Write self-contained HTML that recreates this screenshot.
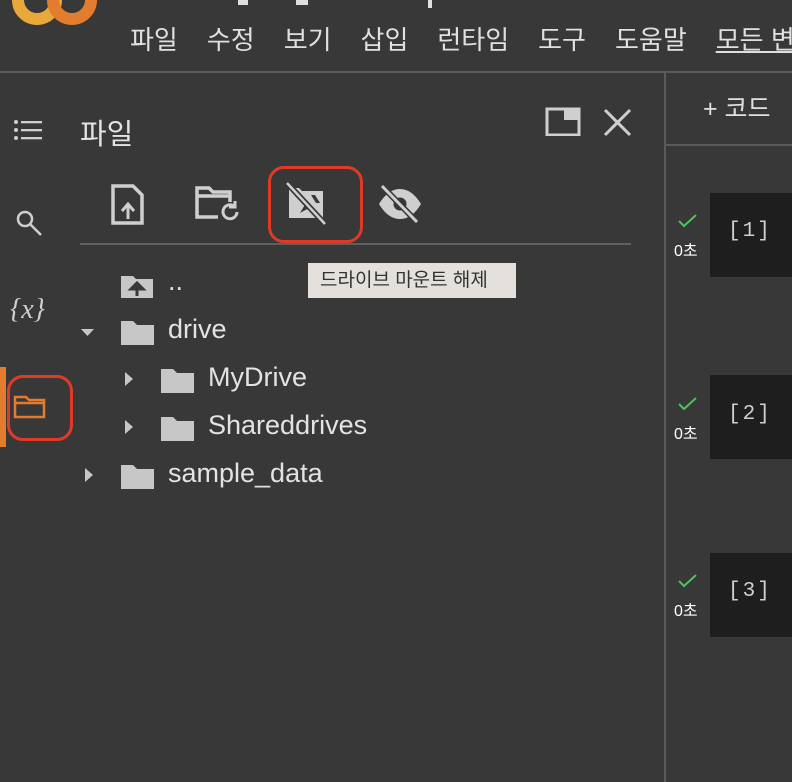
<!DOCTYPE html>
<html><head><meta charset="utf-8"><style>
*{margin:0;padding:0;box-sizing:border-box}
body{width:792px;height:782px;background:#383838;overflow:hidden;position:relative;font-family:"Liberation Sans","Noto Sans CJK KR",sans-serif;color:#e3e3e3}
.a{position:absolute}
.menu{top:20px;left:130px;font-size:26px;color:#e0e0e0;white-space:nowrap}
.menu span{margin-right:29px}
.row{font-size:27px;color:#e3e3e3}
.cell{background:#1e1e1e;width:90px;height:84px;left:710px}
.br{left:728px;font-size:21px;color:#cfcfcf;font-family:"Liberation Mono",monospace;letter-spacing:2px}
.ck{left:674px;font-size:16px;color:#fff}
</style></head><body>
<svg class="a" style="left:0;top:-30px" width="120" height="60">
<circle cx="37" cy="30" r="19" fill="none" stroke="#e8a93a" stroke-width="12"/>
<circle cx="72" cy="30" r="19" fill="none" stroke="#e27c2e" stroke-width="12"/>
</svg>
<div class="a" style="left:238px;top:0;width:10px;height:5px;background:#e0e0e0"></div>
<div class="a" style="left:296px;top:0;width:12px;height:5px;background:#e0e0e0"></div>
<div class="a" style="left:428px;top:0;width:4px;height:8px;background:#e0e0e0"></div>
<div class="a menu"><span>파일</span><span>수정</span><span>보기</span><span>삽입</span><span>런타임</span><span>도구</span><span>도움말</span><span style="text-decoration:underline">모든 변경</span></div>
<div class="a" style="left:0;top:71px;width:792px;height:2px;background:#5a5a5a"></div>
<div class="a" style="left:664px;top:73px;width:2px;height:709px;background:#5a5a5a"></div>
<div class="a" style="left:666px;top:144px;width:126px;height:2px;background:#5a5a5a"></div>
<div class="a" style="left:703px;top:89px;font-size:25px;color:#e0e0e0">+ 코드</div>
<svg class="a" style="left:12px;top:118px" width="34" height="26" fill="#cfcfcf"><circle cx="4" cy="4" r="2"/><circle cx="4" cy="12" r="2"/><circle cx="4" cy="20" r="2"/><rect x="9" y="3" width="21" height="2.3"/><rect x="9" y="11" width="21" height="2.3"/><rect x="9" y="19" width="21" height="2.3"/></svg>
<svg class="a" style="left:14px;top:208px" width="32" height="32" fill="none" stroke="#cfcfcf" stroke-width="2.5"><circle cx="11" cy="11" r="7"/><path d="M16 16l11 11"/></svg>
<div class="a" style="left:10px;top:294px;font-size:28px;color:#cfcfcf;font-family:'Liberation Serif',serif;font-style:italic">{<i>x</i>}</div>
<div class="a" style="left:0;top:367px;width:6px;height:80px;background:#e27c2e"></div>
<div class="a" style="left:7px;top:375px;width:66px;height:66px;border:3px solid #e03a26;border-radius:16px"></div>
<svg class="a" style="left:13px;top:393px" width="34" height="28" fill="none" stroke="#e27c2e" stroke-width="2.5"><path d="M2 4h11l3 3h15v17H2z"/><path d="M2 10h29"/></svg>
<div class="a" style="left:80px;top:111px;font-size:29px;color:#e3e3e3">파일</div>
<svg class="a" style="left:544px;top:106px" width="40" height="30"><rect x="3" y="3" width="32" height="26" fill="none" stroke="#cfcfcf" stroke-width="3"/><rect x="20" y="3" width="15" height="11" fill="#cfcfcf"/></svg>
<svg class="a" style="left:602px;top:107px" width="32" height="30" stroke="#cfcfcf" stroke-width="3"><path d="M3 3l25 25M28 3L3 28"/></svg>
<svg class="a" style="left:110px;top:183px" width="36" height="42"><path d="M3 3h20l9 9v28H3z" fill="none" stroke="#cfcfcf" stroke-width="3.5"/><path d="M18 36V22M12 28l6-7 6 7" stroke="#cfcfcf" stroke-width="3" fill="none"/></svg>
<svg class="a" style="left:194px;top:185px" width="48" height="40" fill="none" stroke="#cfcfcf" stroke-width="3.5"><path d="M24 32H3V3h12l4 4h17v10"/><path d="M3 11h33"/><path d="M43 27a7 7 0 1 1-3-6" stroke-width="3"/><path d="M41 16v6h-6" stroke-width="3"/></svg>
<div class="a" style="left:268px;top:166px;width:95px;height:77px;border:3px solid #e03a26;border-radius:16px"></div>
<svg class="a" style="left:284px;top:180px" width="48" height="48"><path d="M5 8h10l3 3h21v27H5z" fill="#cfcfcf"/><path d="M16 33l6-10 3 5z M27 15h4l5 8h-4z" fill="#383838"/><path d="M3 3l38 41" stroke="#383838" stroke-width="6"/><path d="M3 3l38 41" stroke="#cfcfcf" stroke-width="2.5"/></svg>
<svg class="a" style="left:376px;top:182px" width="50" height="44"><path d="M3 22c6-10 13-15 21-15s15 5 21 15c-6 10-13 15-21 15S9 32 3 22z" fill="#cfcfcf"/><circle cx="24" cy="22" r="6.5" fill="#383838"/><path d="M6 4l35 36" stroke="#383838" stroke-width="6"/><path d="M6 4l35 36" stroke="#cfcfcf" stroke-width="3"/></svg>
<div class="a" style="left:80px;top:243px;width:551px;height:2px;background:#5f5f5f"></div>
<div class="a" style="left:308px;top:263px;width:208px;height:35px;background:#e4e1dd;color:#333;font-size:19px;line-height:35px;padding-left:12px;white-space:nowrap">드라이브 마운트 해제</div>
<svg class="a" style="left:120px;top:273px" width="36" height="26"><path d="M1 3h12l3 3h17v19H1z" fill="#c7c7c7"/><path d="M17 23v-9M11 16l6-6 6 6z" fill="#383838" stroke="#383838" stroke-width="3"/></svg>
<div class="a row" style="left:168px;top:266px">..</div>
<svg class="a" style="left:80px;top:326px" width="16" height="12"><path d="M1 3h13l-6.5 7z" fill="#c7c7c7"/></svg>
<svg class="a" style="left:120px;top:319px" width="36" height="28"><path d="M1 2h12l4 4h17v20H1z" fill="#c7c7c7"/></svg>
<div class="a row" style="left:168px;top:314px">drive</div>
<svg class="a" style="left:123px;top:370px" width="12" height="18"><path d="M2 2v14l8-7z" fill="#c7c7c7"/></svg>
<svg class="a" style="left:160px;top:367px" width="36" height="28"><path d="M1 2h12l4 4h17v20H1z" fill="#c7c7c7"/></svg>
<div class="a row" style="left:208px;top:362px">MyDrive</div>
<svg class="a" style="left:123px;top:418px" width="12" height="18"><path d="M2 2v14l8-7z" fill="#c7c7c7"/></svg>
<svg class="a" style="left:160px;top:415px" width="36" height="28"><path d="M1 2h12l4 4h17v20H1z" fill="#c7c7c7"/></svg>
<div class="a row" style="left:208px;top:410px">Shareddrives</div>
<svg class="a" style="left:83px;top:466px" width="12" height="18"><path d="M2 2v14l8-7z" fill="#c7c7c7"/></svg>
<svg class="a" style="left:120px;top:463px" width="36" height="28"><path d="M1 2h12l4 4h17v20H1z" fill="#c7c7c7"/></svg>
<div class="a row" style="left:168px;top:458px">sample_data</div>
<div class="a cell" style="top:193px"></div>
<div class="a cell" style="top:375px"></div>
<div class="a cell" style="top:553px"></div>
<div class="a br" style="top:220px">[1]</div>
<div class="a br" style="top:403px">[2]</div>
<div class="a br" style="top:580px">[3]</div>
<svg class="a" style="left:677px;top:212px" width="22" height="18" fill="none" stroke="#4cc35a" stroke-width="2"><path d="M2 9l5 5 12-11"/></svg>
<svg class="a" style="left:677px;top:395px" width="22" height="18" fill="none" stroke="#4cc35a" stroke-width="2"><path d="M2 9l5 5 12-11"/></svg>
<svg class="a" style="left:677px;top:572px" width="22" height="18" fill="none" stroke="#4cc35a" stroke-width="2"><path d="M2 9l5 5 12-11"/></svg>
<div class="a ck" style="top:237px">0초</div>
<div class="a ck" style="top:420px">0초</div>
<div class="a ck" style="top:597px">0초</div>
</body></html>
